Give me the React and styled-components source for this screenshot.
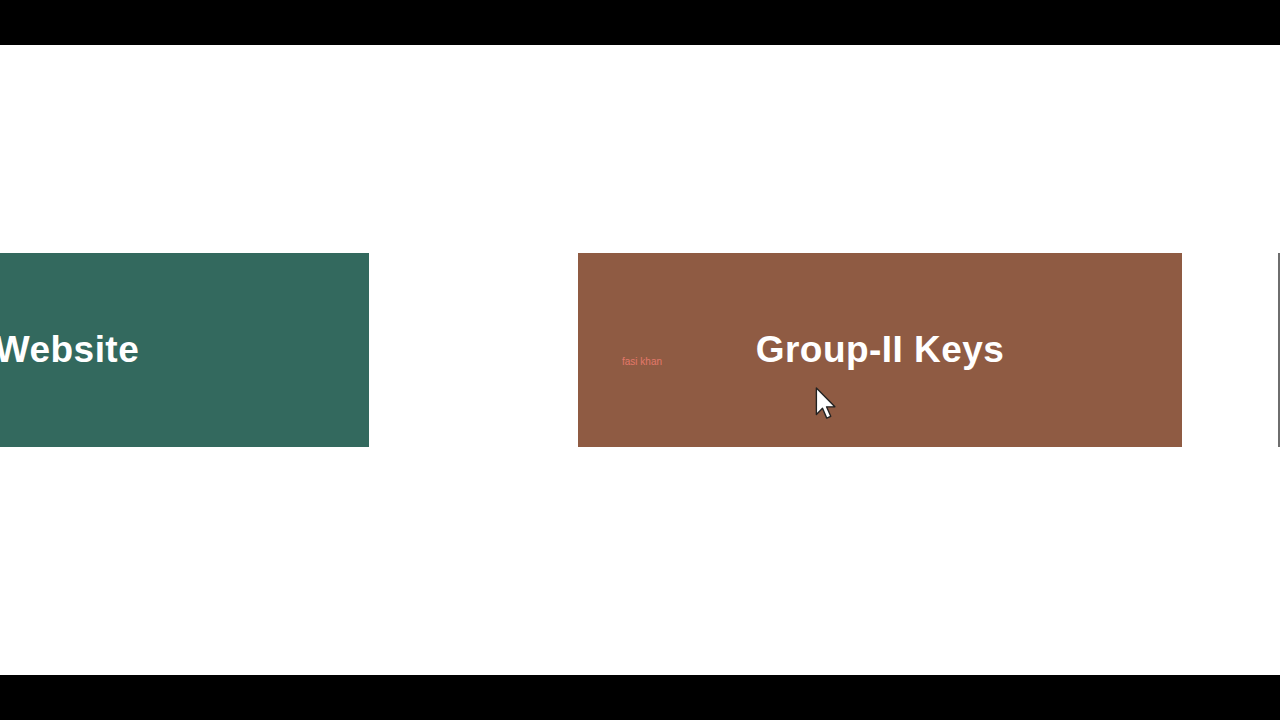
import React from 'react';
import styled, { createGlobalStyle } from 'styled-components';

const GlobalStyle = createGlobalStyle`
  html, body {
    margin: 0;
    padding: 0;
    background: #000;
    font-family: 'Liberation Sans', Arial, sans-serif;
  }
`;

// Letterboxed frame: black bars top and bottom
const Frame = styled.div`
  width: 1280px;
  height: 720px;
  display: flex;
  flex-direction: column;
  background: #000;
  overflow: hidden;
`;

const Bar = styled.div`
  height: 45px;
  flex: none;
  background: #000;
`;

const Stage = styled.div`
  flex: 1;
  background: #fff;
  overflow: hidden;
  padding-top: 208px;
`;

const Track = styled.div`
  display: flex;
  align-items: stretch;
  height: 194px;
  width: max-content;
`;

const Card = styled.div`
  position: relative;
  flex: none;
  width: ${(p) => p.$width || 604}px;
  margin-left: ${(p) => p.$gap || 0}px;
  background: ${(p) => p.$tone};
  border-left: ${(p) => (p.$edge ? `2px solid ${p.$edge}` : 'none')};
  display: flex;
  align-items: center;
  justify-content: center;
`;

const Title = styled.h2`
  margin: 0;
  color: #fff;
  font-size: 37px;
  font-weight: 700;
  letter-spacing: 0.45px;
  white-space: nowrap;
`;

const Watermark = styled.span`
  position: absolute;
  left: 44px;
  top: 103px;
  font-size: 10px;
  color: #e2786a;
`;

const Cursor = styled.svg`
  position: absolute;
  left: 237px;
  top: 134px;
`;

const slides = [
  { title: 'Website', tone: '#33695e' },
  { title: 'Group-II Keys', tone: '#8f5b43', gap: 209, mark: 'fasi khan', pointer: true },
  { title: '', tone: '#ffffff', gap: 96, edge: '#6e6e6e' },
];

const App = () => {
  return (
    <>
      <GlobalStyle />
      <Frame>
        <Bar />
        <Stage>
          <Track style={{ transform: 'translateX(-235px)' }}>
            {slides.map((s, i) => (
              <Card key={i} $tone={s.tone} $gap={s.gap} $edge={s.edge}>
                {s.title && <Title>{s.title}</Title>}
                {s.mark && <Watermark>{s.mark}</Watermark>}
                {s.pointer && (
                  <Cursor width="26" height="38" viewBox="0 0 24 36">
                    <path
                      d="M1 1 L1 26 L6.8 20.2 L10.8 29.5 L14.6 27.8 L10.6 18.8 L18.5 18.8 Z"
                      fill="#fff"
                      stroke="#222"
                      strokeWidth="1.3"
                      strokeLinejoin="round"
                    />
                  </Cursor>
                )}
              </Card>
            ))}
          </Track>
        </Stage>
        <Bar />
      </Frame>
    </>
  );
};

export default App;
